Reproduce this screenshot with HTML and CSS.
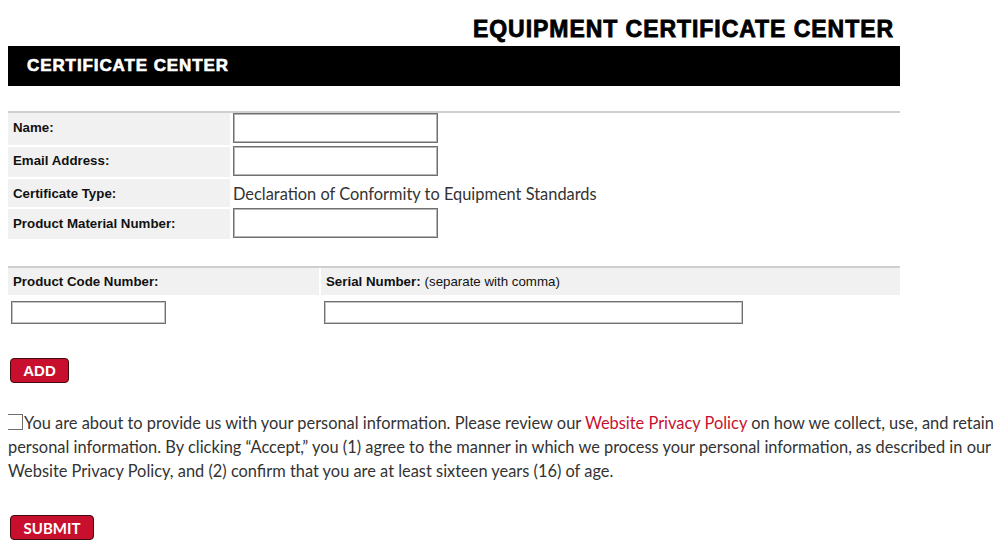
FILE: index.html
```html
<!DOCTYPE html>
<html lang="en">
<head>
<meta charset="UTF-8">
<meta name="viewport" content="width=device-width, initial-scale=1.0">
<title>Equipment Certificate Center</title>
<link rel="stylesheet" href="styles.css">
</head>
<body>
<div class="page">
    <h1 class="title">EQUIPMENT CERTIFICATE CENTER</h1>
    <div class="bar">CERTIFICATE CENTER</div>

    <div class="info-table">
        <div class="label row1">Name:</div>
        <div class="value row1"><input type="text" class="field"></div>
        <div class="label row2">Email Address:</div>
        <div class="value row2"><input type="text" class="field"></div>
        <div class="label row3">Certificate Type:</div>
        <div class="value row3 cert-type">Declaration of Conformity to Equipment Standards</div>
        <div class="label row4">Product Material Number:</div>
        <div class="value row4"><input type="text" class="field"></div>
    </div>

    <div class="product-table">
        <div class="head">Product Code Number:</div>
        <div class="head">Serial Number: <span class="hint">(separate with comma)</span></div>
        <div class="cell"><input type="text" class="code-field"></div>
        <div class="cell"><input type="text" class="serial-field"></div>
    </div>

    <button class="red-button add-button">ADD</button>

    <p class="consent"><input type="checkbox" class="check">You are about to provide us with your personal information. Please review our <a href="#" class="link">Website Privacy Policy</a> on how we collect, use, and retain personal information. By clicking “Accept,” you (1) agree to the manner in which we process your personal information, as described in our Website Privacy Policy, and (2) confirm that you are at least sixteen years (16) of age.</p>

    <button class="red-button submit-button">SUBMIT</button>
</div>
</body>
</html>
```

FILE: styles.css
```css
body {
    margin: 8px;
    background: #fff;
    font-family: Lato, "Liberation Sans", sans-serif;
}

.page {
    width: 892px;
}

.title {
    margin: 0 0 4px;
    padding: 8px 6px 0 0;
    text-align: right;
    font-family: "Liberation Sans", Arial, sans-serif;
    font-size: 23px;
    line-height: 26px;
    font-weight: bold;
    letter-spacing: 0.95px;
    -webkit-text-stroke: 0.8px #000;
    color: #000;
}

.bar {
    height: 40px;
    line-height: 40px;
    padding-left: 19px;
    background: #000;
    color: #fff;
    font-family: "Liberation Sans", Arial, sans-serif;
    font-size: 17px;
    font-weight: bold;
    letter-spacing: 0.9px;
    -webkit-text-stroke: 0.6px #fff;
}

.info-table {
    margin-top: 25px;
    border-top: 2px solid #cfcfcf;
    display: grid;
    grid-template-columns: 222px 1fr;
    grid-template-rows: 32px 30px 28px 30px;
    column-gap: 1px;
    row-gap: 2px;
}

.label {
    background: #f1f1f1;
    padding: 0 5px;
    display: flex;
    align-items: center;
    font-family: "Liberation Sans", Arial, sans-serif;
    font-size: 13.3px;
    font-weight: bold;
    color: #111;
}

.row1,
.row2 {
    padding-bottom: 3px;
}

.row4 {
    padding-bottom: 2px;
}

.value {
    display: flex;
    align-items: center;
    padding-left: 2px;
}

.cert-type {
    font-size: 16.4px;
    color: #333;
    padding-top: 1px;
}

.field {
    box-sizing: border-box;
    width: 205px;
    height: 30px;
    margin: 0;
    border: 1px solid #707070;
    box-shadow: inset 0 0 0 1px #b5b5b5;
    background: #fff;
}

.product-table {
    margin-top: 27px;
    border-top: 2px solid #cfcfcf;
    display: grid;
    grid-template-columns: 311px 1fr;
    grid-template-rows: 27px 29px;
    column-gap: 2px;
}

.head {
    background: #f1f1f1;
    padding: 0 5px;
    display: flex;
    align-items: center;
    font-family: "Liberation Sans", Arial, sans-serif;
    font-size: 13.3px;
    font-weight: bold;
    color: #111;
}

.hint {
    font-weight: normal;
    margin-left: 4px;
}

.cell {
    padding: 6px 3px 0;
}

.code-field,
.serial-field {
    box-sizing: border-box;
    height: 23px;
    margin: 0;
    border: 1px solid #707070;
    box-shadow: inset 0 0 0 1px #c4c4c4;
    background: #fff;
}

.code-field {
    width: 155px;
}

.serial-field {
    width: 419px;
}

.red-button {
    display: block;
    box-sizing: border-box;
    height: 25px;
    margin-left: 2px;
    padding: 0;
    background: #c8102e;
    border: 1px solid #3e0b10;
    border-radius: 4px;
    color: #fff;
    font-weight: bold;
    cursor: pointer;
}

.add-button {
    margin-top: 34px;
    width: 59px;
    font-family: "Liberation Sans", Arial, sans-serif;
    font-size: 15px;
}

.submit-button {
    margin-top: 32px;
    width: 84px;
    font-family: Lato, "Liberation Sans", sans-serif;
    font-size: 15px;
}

.consent {
    margin: 28px 0 0;
    width: 993px;
    font-size: 16.4px;
    line-height: 24px;
    color: #333;
}

.check {
    -webkit-appearance: none;
    appearance: none;
    box-sizing: border-box;
    width: 16px;
    height: 16px;
    margin: 0 1px 0 -1px;
    border: 1px solid #6e6e6e;
    background: #fff;
    vertical-align: -1px;
}

.link {
    color: #c8102e;
    text-decoration: none;
}
```
